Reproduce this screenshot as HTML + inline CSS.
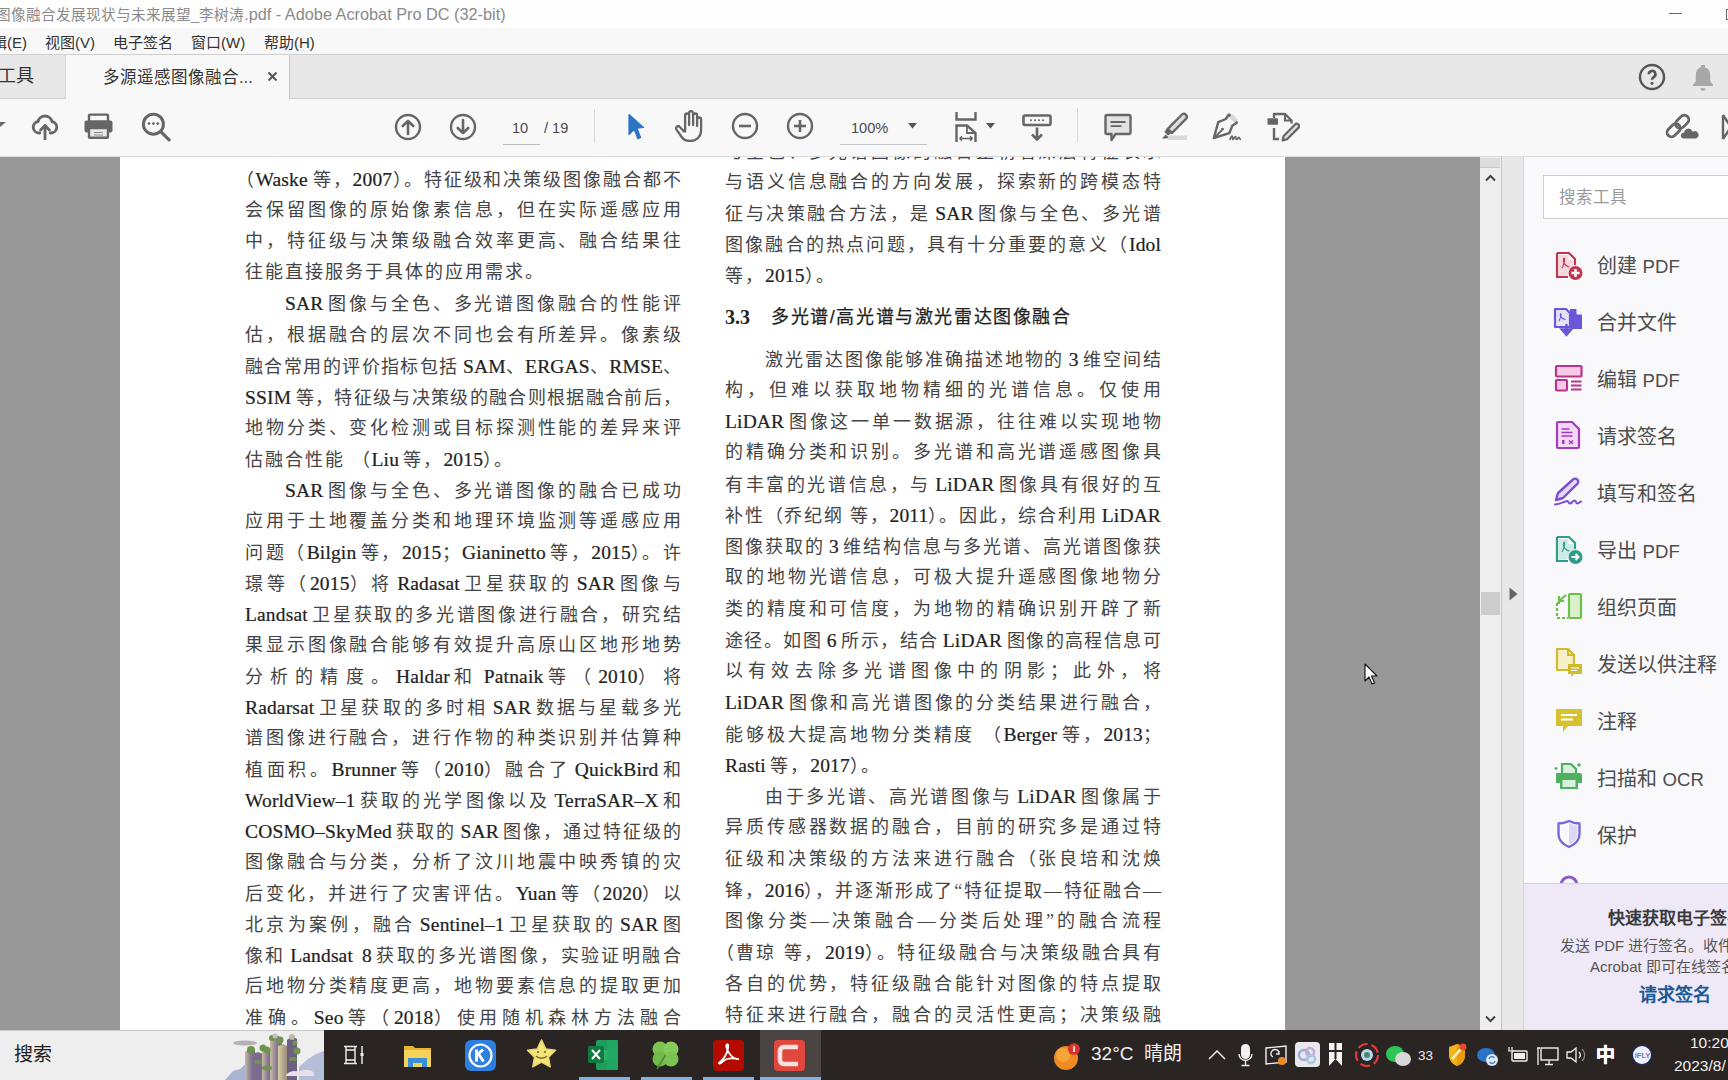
<!DOCTYPE html>
<html lang="zh-CN"><head><meta charset="utf-8">
<style>
*{margin:0;padding:0;box-sizing:border-box}
html,body{width:1728px;height:1080px;overflow:hidden;background:#f8f8f8;font-family:"Liberation Sans",sans-serif;color:#333}
.a{position:absolute}
#title{left:0;top:0;width:1728px;height:28px;background:#fefefe}
#menu{left:0;top:28px;width:1728px;height:26px;background:#f8f8f8}
#tabs{left:0;top:54px;width:1728px;height:45px;background:#e8e8e8;border-top:1px solid #cfcfcf;border-bottom:1px solid #d0d0d0}
#tb{left:0;top:99px;width:1728px;height:58px;background:#f8f8f8;border-bottom:1px solid #dcdcdc}
#doc{left:0;top:157px;width:1480px;height:873px;background:#989898;overflow:hidden}
#page{left:120px;top:0;width:1165px;height:874px;background:#fff}
#sb{left:1480px;top:157px;width:22px;height:873px;background:#eeeeee;border-right:1px solid #c6c6c6}
#rc{left:1502px;top:157px;width:22px;height:873px;background:#e8e8e8;border-right:1px solid #d6d6d6}
#rp{left:1524px;top:157px;width:204px;height:873px;background:#f9f9fb}
#task{left:0;top:1030px;width:1728px;height:50px;background:#2a2524}
.la{-webkit-text-stroke:0.22px #222;color:#222;font-size:19.5px;letter-spacing:0.15px;margin:0 2px}
.la.s0{margin-left:0}
.la.e0{margin-right:0}
.ln{text-autospace:normal;position:absolute;height:31px;line-height:31px;font-family:"Liberation Serif",serif;font-size:18px;letter-spacing:2.76px;color:#444;white-space:nowrap;text-align:justify;text-align-last:justify}
#tb > *{margin-top:-1px}
.mt{top:5px;font-size:15px;line-height:20px;color:#333;white-space:nowrap}
.tl{left:73px;font-size:20px;line-height:26px;color:#4d4d4d;white-space:nowrap}
.tl span{font-size:18.6px}
.ln.l{text-align-last:left}
.hd{position:absolute;height:31px;line-height:31px;font-size:19px;font-weight:bold;color:#231f20;white-space:nowrap}
</style></head><body>

<div id="title" class="a"><div class="a" style="left:-4px;top:4px;font-size:14.6px;line-height:20px;color:#8a8a8a;white-space:nowrap">图像融合发展现状与未来展望_李树涛<span style="font-size:16.3px">.pdf - Adobe Acrobat Pro DC (32-bit)</span></div>
<div class="a" style="left:1669px;top:13px;width:13px;height:1px;background:#666"></div>
<div class="a" style="left:1726px;top:9px;width:10px;height:11px;border:1px solid #666"></div>
</div>
<div id="menu" class="a">
<div class="a mt" style="left:-8px">辑(E)</div>
<div class="a mt" style="left:45px">视图(V)</div>
<div class="a mt" style="left:113px">电子签名</div>
<div class="a mt" style="left:191px">窗口(W)</div>
<div class="a mt" style="left:264px">帮助(H)</div>
</div>
<div id="tabs" class="a">
<div class="a" style="left:-2px;top:8px;font-size:18px;line-height:26px;color:#333">工具</div>
<div class="a" style="left:65px;top:0;width:225px;height:44px;background:#f8f8f8;border-left:1px solid #d4d4d4;border-right:1px solid #c8c8c8"></div>
<div class="a" style="left:103px;top:10px;font-size:16.5px;line-height:24px;color:#333;white-space:nowrap">多源遥感图像融合...</div>
<svg class="a" style="left:267px;top:16px" width="11" height="11" viewBox="0 0 11 11"><path d="M1.5 1.5L9.5 9.5M9.5 1.5L1.5 9.5" stroke="#555" stroke-width="2"/></svg>
<svg class="a" style="left:1638px;top:62px;top:8px" width="28" height="28" viewBox="0 0 28 28"><circle cx="14" cy="14" r="12" fill="none" stroke="#555" stroke-width="2.4"/><path d="M10.8 11.2a3.3 3.3 0 1 1 4.9 2.9c-1.1.7-1.6 1.3-1.6 2.7" fill="none" stroke="#555" stroke-width="2.6"/><circle cx="14" cy="20.3" r="1.5" fill="#555"/></svg>
<svg class="a" style="left:1692px;top:8px" width="22" height="28" viewBox="0 0 22 28"><path d="M9 2h4v2.2c3.5 1 5.2 3.8 5.2 7.5v6.5l2.8 3.6v1.2H1v-1.2l2.8-3.6v-6.5C3.8 8 5.5 5.2 9 4.2z" fill="#a8a8a8"/><path d="M8.5 25.2h5a2.5 2.5 0 0 1-5 0z" fill="#a8a8a8"/></svg>
</div>
<div id="tb" class="a">
<svg class="a" style="left:0;top:22px" width="6" height="8" viewBox="0 0 6 8"><path d="M0 2h6L0 7z" fill="#666"/></svg>
<svg class="a" style="left:31px;top:14px" width="28" height="28" viewBox="0 0 28 28"><path d="M8.8 21H7.8A5.8 5.8 0 0 1 7 9.5a7.2 7.2 0 0 1 14 0A5.8 5.8 0 0 1 20.2 21h-1" fill="none" stroke="#666" stroke-width="2.8" stroke-linecap="round"/><path d="M14 27V13.5M9.6 18l4.4-4.5 4.4 4.5" fill="none" stroke="#666" stroke-width="2.8" stroke-linecap="round" stroke-linejoin="round"/></svg>
<svg class="a" style="left:84px;top:14px" width="29" height="27" viewBox="0 0 29 27"><rect x="5" y="2.6" width="19" height="7" rx="1" fill="none" stroke="#666" stroke-width="2.4"/><rect x="0.5" y="8.5" width="28" height="12" rx="2" fill="#666"/><rect x="5" y="16" width="19" height="9.8" rx="1" fill="#e8e8e8" stroke="#666" stroke-width="2.4"/><path d="M10 20.5h9M10 23h9" stroke="#888" stroke-width="1.2"/></svg>
<svg class="a" style="left:141px;top:14px" width="30" height="30" viewBox="0 0 30 30"><circle cx="12.4" cy="12.2" r="10" fill="none" stroke="#666" stroke-width="3"/><path d="M19.8 19.6l8.3 8.3" stroke="#666" stroke-width="3.2" stroke-linecap="round"/><circle cx="8" cy="11.6" r="1.4" fill="#666"/><circle cx="12.4" cy="11.6" r="1.4" fill="#666"/><circle cx="16.8" cy="11.6" r="1.4" fill="#666"/></svg>
<svg class="a" style="left:394px;top:15px" width="28" height="28" viewBox="0 0 28 28"><circle cx="14" cy="14" r="12" fill="none" stroke="#666" stroke-width="2.4"/><path d="M14 21V8M8.8 13L14 7.8 19.2 13" fill="none" stroke="#666" stroke-width="2.6" stroke-linejoin="round" stroke-linecap="round"/></svg>
<svg class="a" style="left:449px;top:15px" width="28" height="28" viewBox="0 0 28 28"><circle cx="14" cy="14" r="12" fill="none" stroke="#666" stroke-width="2.4"/><path d="M14 7v13M8.8 15L14 20.2 19.2 15" fill="none" stroke="#666" stroke-width="2.6" stroke-linejoin="round" stroke-linecap="round"/></svg>
<div class="a" style="left:512px;top:20px;font-size:14.6px;line-height:20px;color:#4a4a4a">10</div>
<div class="a" style="left:503px;top:46px;width:37px;height:1px;background:#bdbdbd"></div>
<div class="a" style="left:544px;top:20px;font-size:14.6px;line-height:20px;color:#4a4a4a;white-space:nowrap">/ 19</div>
<div class="a" style="left:594px;top:11px;width:1px;height:34px;background:#d6d6d6"></div>
<svg class="a" style="left:627px;top:15px" width="18" height="28" viewBox="0 0 18 28"><path d="M2 1.5L16.5 14.5 10 15.2 13.6 24.5 10.8 25.8 7.2 16.4 2 21.5z" fill="#2b74c5" stroke="#2b74c5" stroke-width="1.2" stroke-linejoin="round"/></svg>
<svg class="a" style="left:675px;top:112px;top:12px" width="31" height="32" viewBox="0 0 31 32"><path d="M9 21.5L4.8 17a2.1 2.1 0 0 0-3.3 2.6l5.2 7.4c2 2.8 4.6 4 8.4 4 6.5 0 11-4.3 11-11V9.5a2 2 0 0 0-4 0V16M22.1 16V5.5a2 2 0 0 0-4 0V15M18.1 15V3.2a2 2 0 0 0-4 0V15M14.1 15V5.5a2 2 0 0 0-4 0V21.5" fill="none" stroke="#666" stroke-width="2.3" stroke-linejoin="round" stroke-linecap="round"/></svg>
<svg class="a" style="left:731px;top:14px" width="28" height="28" viewBox="0 0 28 28"><circle cx="14" cy="14" r="12" fill="none" stroke="#666" stroke-width="2.4"/><path d="M8 14h12" stroke="#666" stroke-width="2.6"/></svg>
<svg class="a" style="left:786px;top:14px" width="28" height="28" viewBox="0 0 28 28"><circle cx="14" cy="14" r="12" fill="none" stroke="#666" stroke-width="2.4"/><path d="M8 14h12M14 8v12" stroke="#666" stroke-width="2.6"/></svg>
<div class="a" style="left:851px;top:20px;font-size:14.6px;line-height:20px;color:#4a4a4a">100%</div>
<svg class="a" style="left:908px;top:25px" width="9" height="6" viewBox="0 0 9 6"><path d="M0 0h9L4.5 5.5z" fill="#555"/></svg>
<div class="a" style="left:840px;top:46px;width:87px;height:1px;background:#c4c4c4"></div>
<svg class="a" style="left:954px;top:14px" width="24" height="31" viewBox="0 0 24 31"><path d="M2.5 0v7.5h19V0" fill="none" stroke="#666" stroke-width="2.4"/><path d="M2.5 30V13.5h10.5l8.5 7.5V30" fill="none" stroke="#666" stroke-width="2.4"/><path d="M13 13.5v7.5h8.5" fill="none" stroke="#666" stroke-width="1.8"/><path d="M5.5 26.5h13M5.5 26.5l2.5-2.2M5.5 26.5l2.5 2.2M18.5 26.5l-2.5-2.2M18.5 26.5l-2.5 2.2" stroke="#666" stroke-width="1.6" fill="none"/></svg>
<svg class="a" style="left:986px;top:25px" width="9" height="6" viewBox="0 0 9 6"><path d="M0 0h9L4.5 5.5z" fill="#555"/></svg>
<svg class="a" style="left:1022px;top:16px" width="30" height="28" viewBox="0 0 30 28"><rect x="1.5" y="1.5" width="27" height="9.5" rx="1.5" fill="none" stroke="#666" stroke-width="2.6"/><circle cx="9" cy="6.2" r="1" fill="#666"/><circle cx="13" cy="6.2" r="1" fill="#666"/><circle cx="17" cy="6.2" r="1" fill="#666"/><circle cx="21" cy="6.2" r="1" fill="#666"/><path d="M15 13.5v12M10 20.5l5 5 5-5" fill="none" stroke="#666" stroke-width="2.6" stroke-linejoin="round"/></svg>
<div class="a" style="left:1077px;top:10px;width:1px;height:34px;background:#d6d6d6"></div>
<svg class="a" style="left:1104px;top:15px" width="28" height="29" viewBox="0 0 28 29"><path d="M3 2h22a1.5 1.5 0 0 1 1.5 1.5v16a1.5 1.5 0 0 1-1.5 1.5H11.5L7.5 27v-6H3a1.5 1.5 0 0 1-1.5-1.5v-16A1.5 1.5 0 0 1 3 2z" fill="#e3e3e3" stroke="#666" stroke-width="2.4" stroke-linejoin="round"/><path d="M6.5 9h15M6.5 13.2h11" stroke="#666" stroke-width="1.8"/></svg>
<svg class="a" style="left:1157px;top:14px" width="32" height="30" viewBox="0 0 32 30"><path d="M25 2.5a3 3 0 0 1 4.2 4.2L15 21l-4.2-4.2z" fill="#ddd" stroke="#666" stroke-width="2.4" stroke-linejoin="round"/><path d="M10.8 16.8l-2.2 3 2.5 2.5 3-2.2" fill="#666" stroke="#666" stroke-width="2" stroke-linejoin="round"/><path d="M8.6 22.5L5 26.5h5l1.5-1.6z" fill="#666"/><rect x="11" y="23.5" width="19" height="4.5" fill="#d9d9d9"/></svg>
<svg class="a" style="left:1212px;top:14px" width="32" height="30" viewBox="0 0 32 30"><path d="M16.8 2.5l-3 4.5-7.5 3.2L1.8 26l15.5-4.8 3-7.5 4.5-3z" fill="none" stroke="#666" stroke-width="2.4" stroke-linejoin="round"/><path d="M17 2.2l7.8 7.8" stroke="#666" stroke-width="2"/><path d="M17.5 5l5.5 5.5 3-3-5.5-5.5z" fill="#d9d9d9"/><path d="M2.5 25.5l7.5-7.5" stroke="#666" stroke-width="1.8"/><circle cx="10.5" cy="17.2" r="1.4" fill="#666"/><path d="M18 27.5c1-3 2-4 2.5-3s-.5 3 .5 3 1.5-3 2.5-3 0 3 1 3 1.5-2 2.5-2.2c.8 0 .6 2.2 1.5 2.2" fill="none" stroke="#666" stroke-width="1.6" stroke-linecap="round"/></svg>
<svg class="a" style="left:1266px;top:14px" width="34" height="31" viewBox="0 0 34 31"><path d="M8 6V2h11l6.5 6.5v3" fill="none" stroke="#666" stroke-width="2.4" stroke-linejoin="round"/><path d="M19 2v6.5h6.5" fill="none" stroke="#666" stroke-width="2"/><rect x="1.5" y="6.2" width="10.5" height="6.5" rx="1" fill="#666"/><path d="M8 16v11h5" fill="none" stroke="#666" stroke-width="2.4"/><path d="M29 12.5a2.4 2.4 0 0 1 3.4 3.4L21 27.3l-4.4 1.2 1.1-4.5z" fill="#ddd" stroke="#666" stroke-width="2.2" stroke-linejoin="round"/></svg>
<svg class="a" style="left:1665px;top:13px" width="34" height="30" viewBox="0 0 34 30"><g transform="rotate(-45 14 14)"><rect x="-1" y="9.5" width="15" height="9" rx="4.5" fill="none" stroke="#666" stroke-width="2.8"/><rect x="11" y="9.5" width="15" height="9" rx="4.5" fill="none" stroke="#666" stroke-width="2.8"/></g><path d="M18 28a3.6 3.6 0 0 1 .6-7.1 5 5 0 0 1 9.4-1A3.9 3.9 0 0 1 31.5 28z" fill="#666" stroke="#f8f8f8" stroke-width="1.2"/></svg>
<svg class="a" style="left:1720px;top:15px" width="10" height="28" viewBox="0 0 10 28"><path d="M3 2v24M3 2l8 12-8 12" fill="none" stroke="#666" stroke-width="2.4"/></svg>
</div>

<div id="doc" class="a"><div id="page" class="a">
<div class="ln" style="left:125px;top:7.3px;width:437.42px;letter-spacing:1.418px"><span style="margin-left:-9.50px">（</span><span class="la s0">Waske</span>等，<span class="la s0 e0">2007</span>）。特征级和决策级图像融合都不</div>
<div class="ln" style="left:125px;top:38.3px;width:438.87px;letter-spacing:2.870px">会保留图像的原始像素信息，但在实际遥感应用</div>
<div class="ln" style="left:125px;top:69.4px;width:438.87px;letter-spacing:2.870px">中，特征级与决策级融合效率更高、融合结果往</div>
<div class="ln l" style="left:125px;top:100.4px;width:436.00px;letter-spacing:2.000px">往能直接服务于具体的应用需求。</div>
<div class="ln" style="left:165px;top:131.4px;width:398.91px;letter-spacing:2.911px"><span class="la s0">SAR</span>图像与全色、多光谱图像融合的性能评</div>
<div class="ln" style="left:125px;top:162.5px;width:438.87px;letter-spacing:2.870px">估，根据融合的层次不同也会有所差异。像素级</div>
<div class="ln" style="left:125px;top:193.5px;width:437.39px;letter-spacing:1.388px">融合常用的评价指标包括<span class="la e0">SAM</span>、<span class="la s0 e0">ERGAS</span>、<span class="la s0 e0">RMSE</span>、</div>
<div class="ln" style="left:125px;top:224.5px;width:437.31px;letter-spacing:1.307px"><span class="la s0">SSIM</span>等，特征级与决策级的融合则根据融合前后，</div>
<div class="ln" style="left:125px;top:255.5px;width:438.87px;letter-spacing:2.870px">地物分类、变化检测或目标探测性能的差异来评</div>
<div class="ln l" style="left:125px;top:286.6px;width:436.00px;letter-spacing:2.000px">估融合性能 （<span class="la s0">Liu</span>等，<span class="la s0 e0">2015</span>）。</div>
<div class="ln" style="left:165px;top:317.6px;width:398.91px;letter-spacing:2.911px"><span class="la s0">SAR</span>图像与全色、多光谱图像的融合已成功</div>
<div class="ln" style="left:125px;top:348.6px;width:438.87px;letter-spacing:2.870px">应用于土地覆盖分类和地理环境监测等遥感应用</div>
<div class="ln" style="left:125px;top:379.7px;width:438.50px;letter-spacing:2.499px">问题（<span class="la s0">Bilgin</span>等，<span class="la s0 e0">2015</span>；<span class="la s0">Gianinetto</span>等，<span class="la s0 e0">2015</span>）。许</div>
<div class="ln" style="left:125px;top:410.7px;width:439.60px;letter-spacing:3.604px">璟等（<span class="la s0 e0">2015</span>）将<span class="la">Radasat</span>卫星获取的<span class="la">SAR</span>图像与</div>
<div class="ln" style="left:125px;top:441.7px;width:438.60px;letter-spacing:2.599px"><span class="la s0">Landsat</span>卫星获取的多光谱图像进行融合，研究结</div>
<div class="ln" style="left:125px;top:472.8px;width:438.87px;letter-spacing:2.870px">果显示图像融合能够有效提升高原山区地形地势</div>
<div class="ln" style="left:125px;top:503.8px;width:443.12px;letter-spacing:7.115px">分析的精度。<span class="la s0">Haldar</span>和<span class="la">Patnaik</span>等（<span class="la s0 e0">2010</span>）将</div>
<div class="ln" style="left:125px;top:534.8px;width:439.18px;letter-spacing:3.176px"><span class="la s0">Radarsat</span>卫星获取的多时相<span class="la">SAR</span>数据与星载多光</div>
<div class="ln" style="left:125px;top:565.8px;width:438.87px;letter-spacing:2.870px">谱图像进行融合，进行作物的种类识别并估算种</div>
<div class="ln" style="left:125px;top:596.9px;width:439.58px;letter-spacing:3.584px">植面积。<span class="la s0">Brunner</span>等（<span class="la s0 e0">2010</span>）融合了<span class="la">QuickBird</span>和</div>
<div class="ln" style="left:125px;top:627.9px;width:439.07px;letter-spacing:3.074px"><span class="la s0">WorldView–1</span>获取的光学图像以及<span class="la">TerraSAR–X</span>和</div>
<div class="ln" style="left:125px;top:658.9px;width:437.90px;letter-spacing:1.899px"><span class="la s0">COSMO–SkyMed</span>获取的<span class="la">SAR</span>图像，通过特征级的</div>
<div class="ln" style="left:125px;top:690.0px;width:438.87px;letter-spacing:2.870px">图像融合与分类，分析了汶川地震中映秀镇的灾</div>
<div class="ln" style="left:125px;top:721.0px;width:438.79px;letter-spacing:2.792px">后变化，并进行了灾害评估。<span class="la s0">Yuan</span>等（<span class="la s0 e0">2020</span>）以</div>
<div class="ln" style="left:125px;top:752.0px;width:439.29px;letter-spacing:3.286px">北京为案例，融合<span class="la">Sentinel–1</span>卫星获取的<span class="la">SAR</span>图</div>
<div class="ln" style="left:125px;top:783.0px;width:438.45px;letter-spacing:2.454px">像和<span class="la">Landsat</span> <span class="la s0">8</span>获取的多光谱图像，实验证明融合</div>
<div class="ln" style="left:125px;top:814.1px;width:438.87px;letter-spacing:2.870px">后地物分类精度更高，地物要素信息的提取更加</div>
<div class="ln" style="left:125px;top:845.1px;width:440.91px;letter-spacing:4.910px">准确。<span class="la s0">Seo</span>等（<span class="la s0 e0">2018</span>）使用随机森林方法融合</div>
<div class="ln" style="left:605px;top:-19.9px;width:438.87px;letter-spacing:2.870px">与全色、多光谱图像的融合正朝着深层特征表示</div>
<div class="ln" style="left:605px;top:9.5px;width:438.87px;letter-spacing:2.870px">与语义信息融合的方向发展，探索新的跨模态特</div>
<div class="ln" style="left:605px;top:40.8px;width:438.57px;letter-spacing:2.573px">征与决策融合方法，是<span class="la">SAR</span>图像与全色、多光谱</div>
<div class="ln" style="left:605px;top:72.0px;width:436.00px;letter-spacing:2.169px">图像融合的热点问题，具有十分重要的意义（<span class="la s0 e0">Idol</span></div>
<div class="ln l" style="left:605px;top:103.2px;width:436.00px;letter-spacing:2.000px">等，<span class="la s0 e0">2015</span>）。</div>
<div class="hd" style="left:605px;top:144.5px"><span style="font-family:'Liberation Serif',serif;font-weight:bold;font-size:20px">3.3</span></div>
<div class="hd" style="left:651px;top:144.5px;font-size:18px;font-weight:normal;-webkit-text-stroke:0.25px #231f20;letter-spacing:1.6px">多光谱/高光谱与激光雷达图像融合</div>
<div class="ln" style="left:645px;top:186.5px;width:397.93px;letter-spacing:1.934px">激光雷达图像能够准确描述地物的<span class="la">3</span>维空间结</div>
<div class="ln" style="left:605px;top:217.8px;width:439.97px;letter-spacing:3.968px">构，但难以获取地物精细的光谱信息。仅使用</div>
<div class="ln" style="left:605px;top:249.0px;width:438.81px;letter-spacing:2.807px"><span class="la s0">LiDAR</span>图像这一单一数据源，往往难以实现地物</div>
<div class="ln" style="left:605px;top:280.2px;width:438.87px;letter-spacing:2.870px">的精确分类和识别。多光谱和高光谱遥感图像具</div>
<div class="ln" style="left:605px;top:311.5px;width:438.56px;letter-spacing:2.557px">有丰富的光谱信息，与<span class="la">LiDAR</span>图像具有很好的互</div>
<div class="ln" style="left:605px;top:342.8px;width:436.00px;letter-spacing:1.751px">补性（乔纪纲 等，<span class="la s0 e0">2011</span>）。因此，综合利用<span class="la e0">LiDAR</span></div>
<div class="ln" style="left:605px;top:374.0px;width:437.94px;letter-spacing:1.940px">图像获取的<span class="la">3</span>维结构信息与多光谱、高光谱图像获</div>
<div class="ln" style="left:605px;top:405.2px;width:438.87px;letter-spacing:2.870px">取的地物光谱信息，可极大提升遥感图像地物分</div>
<div class="ln" style="left:605px;top:436.5px;width:438.87px;letter-spacing:2.870px">类的精度和可信度，为地物的精确识别开辟了新</div>
<div class="ln" style="left:605px;top:467.8px;width:437.46px;letter-spacing:1.463px">途径。如图<span class="la">6</span>所示，结合<span class="la">LiDAR</span>图像的高程信息可</div>
<div class="ln" style="left:605px;top:499.0px;width:441.19px;letter-spacing:5.189px">以有效去除多光谱图像中的阴影；此外，将</div>
<div class="ln" style="left:605px;top:530.2px;width:438.81px;letter-spacing:2.807px"><span class="la s0">LiDAR</span>图像和高光谱图像的分类结果进行融合，</div>
<div class="ln" style="left:605px;top:561.5px;width:438.83px;letter-spacing:2.828px">能够极大提高地物分类精度 （<span class="la s0">Berger</span>等，<span class="la s0 e0">2013</span>；</div>
<div class="ln l" style="left:605px;top:592.8px;width:436.00px;letter-spacing:2.000px"><span class="la s0">Rasti</span>等，<span class="la s0 e0">2017</span>）。</div>
<div class="ln" style="left:645px;top:624.0px;width:398.63px;letter-spacing:2.631px">由于多光谱、高光谱图像与<span class="la">LiDAR</span>图像属于</div>
<div class="ln" style="left:605px;top:655.2px;width:438.87px;letter-spacing:2.870px">异质传感器数据的融合，目前的研究多是通过特</div>
<div class="ln" style="left:605px;top:686.5px;width:438.87px;letter-spacing:2.870px">征级和决策级的方法来进行融合（张良培和沈焕</div>
<div class="ln" style="left:605px;top:717.8px;width:437.84px;letter-spacing:1.840px">锋，<span class="la s0 e0">2016</span>），并逐渐形成了“特征提取—特征融合—</div>
<div class="ln" style="left:605px;top:749.0px;width:439.37px;letter-spacing:3.370px">图像分类—决策融合—分类后处理”的融合流程</div>
<div class="ln" style="left:605px;top:780.2px;width:438.01px;letter-spacing:2.015px"><span style="margin-left:-9.50px">（</span>曹琼 等，<span class="la s0 e0">2019</span>）。特征级融合与决策级融合具有</div>
<div class="ln" style="left:605px;top:811.5px;width:438.87px;letter-spacing:2.870px">各自的优势，特征级融合能针对图像的特点提取</div>
<div class="ln" style="left:605px;top:842.8px;width:438.87px;letter-spacing:2.870px">特征来进行融合，融合的灵活性更高；决策级融</div>
</div><!--/page--></div>

<div id="sb" class="a">
<div class="a" style="left:0;top:1px;width:20px;height:10px;background:#dcdcdc;border-bottom:1px solid #c8c8c8"></div>
<svg class="a" style="left:5px;top:17px" width="11" height="8" viewBox="0 0 11 8"><path d="M1 6.5L5.5 2 10 6.5" fill="none" stroke="#444" stroke-width="2"/></svg>
<div class="a" style="left:1px;top:435px;width:19px;height:23px;background:#cdcdcd"></div>
<svg class="a" style="left:5px;top:858px" width="11" height="8" viewBox="0 0 11 8"><path d="M1 1.5L5.5 6 10 1.5" fill="none" stroke="#444" stroke-width="2"/></svg>
</div>
<div id="rc" class="a">
<svg class="a" style="left:7px;top:430px" width="9" height="14" viewBox="0 0 9 14"><path d="M0.5 0.5L8.5 7 0.5 13.5z" fill="#666"/></svg>
</div>
<div id="rp" class="a">
<div class="a" style="left:19px;top:18px;width:200px;height:44px;background:#fff;border:1px solid #cfcfcf"></div>
<div class="a" style="left:35px;top:29px;font-size:16.5px;line-height:22px;color:#9a9a9a;white-space:nowrap">搜索工具</div>
<div class="a tl" style="top:96px">创建 <span>PDF</span></div>
<div class="a tl" style="top:153px">合并文件</div>
<div class="a tl" style="top:210px">编辑 <span>PDF</span></div>
<div class="a tl" style="top:267px">请求签名</div>
<div class="a tl" style="top:324px">填写和签名</div>
<div class="a tl" style="top:381px">导出 <span>PDF</span></div>
<div class="a tl" style="top:438px">组织页面</div>
<div class="a tl" style="top:495px">发送以供注释</div>
<div class="a tl" style="top:552px">注释</div>
<div class="a tl" style="top:609px">扫描和 <span>OCR</span></div>
<div class="a tl" style="top:666px">保护</div>

<svg class="a" style="left:30px;top:94px" width="30" height="30" viewBox="0 0 30 30"><path d="M3 2h12l6 6v6" fill="none" stroke="#c0364f" stroke-width="2.2"/><path d="M3 2v24h11" fill="#f6d9de" stroke="#c0364f" stroke-width="2.2"/><path d="M4.5 4h10v5h5v7a8 8 0 0 0-6 8.5H4.5z" fill="#f6d9de"/><path d="M8 17c2-4 3-8 2.5-9.5S9 9 9.5 11s4 5 6 5" fill="none" stroke="#c0364f" stroke-width="1.1"/><circle cx="21.5" cy="22" r="7" fill="#c0364f"/><path d="M21.5 18v8M17.5 22h8" stroke="#fff" stroke-width="2.4"/></svg>
<svg class="a" style="left:29px;top:150px" width="32" height="32" viewBox="0 0 32 32"><path d="M2 2h11l4 4v14H2z" fill="#e6e1fb" stroke="#6957d8" stroke-width="2.2" stroke-linejoin="round"/><path d="M6 14c1.5-3 2.3-6 2-7s-1 .5-.5 2 3 3.5 5 3.5" fill="none" stroke="#6957d8" stroke-width="1.1"/><path d="M17 2h7l5 5v15H17z" fill="#6957d8"/><path d="M24 2v5h5" fill="#fff" stroke="#fff" stroke-width="1"/><path d="M13.5 17v9M8.8 22.5L13.5 28l4.7-5.5z" fill="#6957d8" stroke="#6957d8" stroke-width="2.4"/></svg>
<svg class="a" style="left:30px;top:207px" width="30" height="30" viewBox="0 0 30 30"><rect x="2" y="2" width="25.5" height="10.5" rx="1" fill="#f7c9e6" stroke="#b8338a" stroke-width="2.2"/><rect x="2" y="16" width="11" height="10.5" rx="1" fill="#f7c9e6" stroke="#b8338a" stroke-width="2.2"/><path d="M17 17.5h10.5M17 21.5h10.5M17 25.5h10.5" stroke="#b8338a" stroke-width="1.8"/></svg>
<svg class="a" style="left:31px;top:263px" width="28" height="30" viewBox="0 0 28 30"><path d="M3 2h14l7 7v18a1 1 0 0 1-1 1H3a1 1 0 0 1-1-1V3a1 1 0 0 1 1-1z" fill="#f3d9f7" stroke="#a73bc0" stroke-width="2.2" stroke-linejoin="round"/><path d="M6.5 9h8M6.5 12.5h11M6.5 16h11" stroke="#a73bc0" stroke-width="1.5"/><path d="M7 20h2.5v4H7z" fill="#a73bc0"/><path d="M14 20.5l4 3.5M18 20.5l-4 3.5" stroke="#a73bc0" stroke-width="1.6"/></svg>
<svg class="a" style="left:28px;top:320px" width="32" height="30" viewBox="0 0 32 30"><path d="M21 2.5a3 3 0 0 1 4.3 4.3L11 21l-7 2 2-7z" fill="#e3d8f8" stroke="#7b4fd0" stroke-width="2.4" stroke-linejoin="round"/><path d="M3 27.5c5-.5 9-3 12-3.5 2-.2 1 2.5 3 2.5s2.5-3 4.5-3 1 3 3 3 2-2 3.5-2" fill="none" stroke="#7b4fd0" stroke-width="2" stroke-linecap="round"/></svg>
<svg class="a" style="left:30px;top:378px" width="30" height="30" viewBox="0 0 30 30"><path d="M3 2h12l6 6v6" fill="none" stroke="#2f9c8a" stroke-width="2.2"/><path d="M3 2v24h11" fill="none" stroke="#2f9c8a" stroke-width="2.2"/><path d="M4.5 4h10v5h5v7a8 8 0 0 0-6 8.5H4.5z" fill="#cdebe4"/><path d="M8 17c2-4 3-8 2.5-9.5S9 9 9.5 11s4 5 6 5" fill="none" stroke="#2f9c8a" stroke-width="1.1"/><circle cx="21.5" cy="22" r="7" fill="#2f9c8a"/><path d="M17.5 22h6.5M21.5 19l3 3-3 3" fill="none" stroke="#fff" stroke-width="2"/></svg>
<svg class="a" style="left:30px;top:434px" width="30" height="30" viewBox="0 0 30 30"><rect x="15" y="3" width="12" height="24" rx="1" fill="#dcf0cf" stroke="#6cc04a" stroke-width="2.2"/><path d="M3 12v15h11M3 12h4" fill="none" stroke="#6cc04a" stroke-width="2.2" stroke-dasharray="3 2"/><path d="M12 4L5 10M5 5v5h5" fill="none" stroke="#6cc04a" stroke-width="2.2"/></svg>
<svg class="a" style="left:30px;top:490px" width="30" height="32" viewBox="0 0 30 32"><path d="M3 2h11l6 6v15H3z" fill="#f6f0c6" stroke="#cdbd2c" stroke-width="2.2" stroke-linejoin="round"/><path d="M14 2v6h6" fill="none" stroke="#cdbd2c" stroke-width="2"/><path d="M14 17h14v10H20l-3 3v-3h-3z" fill="#cdbd2c"/><path d="M17 21h8M17 23.5h6" stroke="#fff" stroke-width="1.2"/></svg>
<svg class="a" style="left:30px;top:549px" width="30" height="30" viewBox="0 0 30 30"><path d="M3 3h24a1 1 0 0 1 1 1v15a1 1 0 0 1-1 1H14l-5 6v-6H3a1 1 0 0 1-1-1V4a1 1 0 0 1 1-1z" fill="#d6c12e"/><path d="M7 9h16M7 13.5h12" stroke="#fff" stroke-width="2"/></svg>
<svg class="a" style="left:29px;top:604px" width="32" height="32" viewBox="0 0 32 32"><path d="M9 12V3h9l5 5v4" fill="#d8f0dc" stroke="#4fb062" stroke-width="2.2"/><path d="M3 12h24a2 2 0 0 1 2 2v8h-4v6H7v-6H3z" fill="#4fb062"/><rect x="9.5" y="19" width="13" height="7" fill="#d8f0dc"/><path d="M26 2v4M24 4h4M3 6v3M1.5 7.5h3" stroke="#4fb062" stroke-width="1.3"/></svg>
<svg class="a" style="left:32px;top:662px" width="26" height="30" viewBox="0 0 26 30"><path d="M13 2C9 4 6 4.5 2.5 4.5V15c0 6 4.5 10.5 10.5 13 6-2.5 10.5-7 10.5-13V4.5C20 4.5 17 4 13 2z" fill="none" stroke="#7a68d6" stroke-width="2.4" stroke-linejoin="round"/><path d="M13 4.2c3 1.4 5.5 2 8.3 2.2V15c0 4.8-3.5 8.5-8.3 10.7z" fill="#ddd6f6"/></svg>
<svg class="a" style="left:34px;top:718px" width="22" height="10" viewBox="0 0 22 10"><path d="M3 10a8 8 0 0 1 16 0" fill="none" stroke="#8a5cc9" stroke-width="3"/></svg>

<div class="a" style="left:0;top:726px;width:204px;height:148px;background:#efe9f7;border-top:1px solid #d7d0e2"></div>
<div class="a" style="left:84px;top:751px;font-size:17px;line-height:22px;font-weight:bold;color:#3a3a3a;white-space:nowrap">快速获取电子签名</div>
<div class="a" style="left:36px;top:779px;font-size:15px;line-height:20px;color:#555;white-space:nowrap">发送 PDF 进行签名。收件人</div>
<div class="a" style="left:66px;top:800px;font-size:15px;line-height:20px;color:#555;white-space:nowrap">Acrobat 即可在线签名</div>
<div class="a" style="left:115px;top:826px;font-size:18px;line-height:24px;font-weight:bold;color:#1c5a96;white-space:nowrap">请求签名</div>
</div>


<div id="task" class="a">
<div class="a" style="left:0;top:0;width:324px;height:50px;background:#eeeeee;border-top:1px solid #c8c8c8"></div>
<div class="a" style="left:14px;top:13px;font-size:19px;line-height:24px;color:#222">搜索</div>
<svg class="a" style="left:215px;top:0px" width="109" height="50" viewBox="0 0 109 50">
<defs><linearGradient id="pg1" x1="0" x2="1"><stop offset="0" stop-color="#c9bca0"/><stop offset=".5" stop-color="#8f8098"/><stop offset="1" stop-color="#6a5c7c"/></linearGradient>
<linearGradient id="pg2" x1="0" x2="1"><stop offset="0" stop-color="#d8cca0"/><stop offset="1" stop-color="#9a8c80"/></linearGradient></defs>
<path d="M10 50l8-9 7-2 9-8 4 19z" fill="#a8b4d0"/>
<path d="M84 50V37l9-8 8-5 8-3v29z" fill="#b4bed8"/>
<ellipse cx="30" cy="13" rx="12" ry="2.6" fill="#b6b0b8"/>
<path d="M30 50V22l4-3 6 2v29z" fill="url(#pg1)"/>
<path d="M38 50V24l5-2 5 2v26z" fill="#7c6b8e"/>
<path d="M47 50V19l5-2 5 2v31z" fill="url(#pg1)"/>
<path d="M55 50V8l6-3 6 3v42z" fill="url(#pg1)"/>
<path d="M63 50V16l5-2 4 2v34z" fill="url(#pg2)"/>
<path d="M72 50V10l5-4 5 3v41z" fill="#6e6080"/>
<g fill="#6f9450"><circle cx="36" cy="20" r="4"/><circle cx="48" cy="18" r="3.5"/><circle cx="52" cy="20" r="3.5"/><circle cx="57" cy="8" r="3"/><circle cx="65" cy="10" r="3.5"/><circle cx="82" cy="21" r="3.5"/><circle cx="80" cy="13" r="2.5"/><ellipse cx="43" cy="32" rx="4" ry="2"/><ellipse cx="52" cy="38" rx="5" ry="2.5"/><ellipse cx="78" cy="29" rx="4" ry="2"/></g>
<circle cx="77" cy="7" r="3" fill="#bdb8a8"/><circle cx="60" cy="6" r="2.5" fill="#c8c0b0"/>
<path d="M71 45c3-4 9-5 13-3 4-3 12-3 15 1v3H71z" fill="#e9dfe8"/>
</svg>
<div class="a" style="left:324px;top:0;width:1404px;height:50px;background:#2a2423"></div>
<svg class="a" style="left:343px;top:15px" width="22" height="20" viewBox="0 0 22 20"><path d="M1 1.5h13M1 18.5h13M3 1.5v17M12 1.5v17M3 5h9M3 15h9" fill="none" stroke="#f2f2f2" stroke-width="1.4"/><path d="M19 1v18" stroke="#f2f2f2" stroke-width="1.4"/><rect x="17.5" y="8" width="3" height="3" fill="#f2f2f2"/></svg>
<svg class="a" style="left:403px;top:13px" width="29" height="25" viewBox="0 0 29 25"><path d="M1 3h9l2 2h16v19H1z" fill="#e8b730"/><path d="M1 7h27v17H1z" fill="#f7d25a"/><path d="M5 24v-9h19v9h-5v-4h-9v4z" fill="#3a8fd6"/></svg>
<svg class="a" style="left:465px;top:10px" width="31" height="31" viewBox="0 0 31 31"><rect x="0" y="0" width="31" height="31" rx="6" fill="#2f7fe0"/><circle cx="15.5" cy="15.5" r="11" fill="none" stroke="#fff" stroke-width="2.2"/><path d="M11.5 9.5v12M11.5 15.5l6.5-6M13.5 14l5 7.5" fill="none" stroke="#fff" stroke-width="3"/></svg>
<svg class="a" style="left:526px;top:9px" width="31" height="31" viewBox="0 0 31 31"><path d="M15.5 1l4.3 9 9.7 1.3-7 6.8 1.7 9.7-8.7-4.6-8.7 4.6 1.7-9.7-7-6.8 9.7-1.3z" fill="#f3e57a" stroke="#e8d86a" stroke-width="1.5" stroke-linejoin="round"/><path d="M10 17c2.5 3 8.5 3 11 0" fill="none" stroke="#7a6a20" stroke-width="1.3"/><circle cx="12" cy="13" r="1.1" fill="#7a6a20"/><circle cx="19" cy="13" r="1.1" fill="#7a6a20"/></svg>
<svg class="a" style="left:588px;top:10px" width="31" height="30" viewBox="0 0 31 30"><rect x="8" y="0" width="22" height="30" rx="2" fill="#1e9e5a"/><rect x="8" y="10" width="22" height="10" fill="#2bb36a"/><rect x="19" y="0" width="11" height="30" fill="#21a863" opacity=".8"/><rect x="0" y="6" width="16" height="17" rx="2" fill="#107c41"/><path d="M4 10l8 9M12 10l-8 9" stroke="#fff" stroke-width="2"/></svg>
<svg class="a" style="left:650px;top:9px" width="31" height="32" viewBox="0 0 31 32"><circle cx="10" cy="10" r="7.5" fill="#7cc451"/><circle cx="21" cy="10" r="7.5" fill="#86cc5a"/><circle cx="10" cy="20" r="7.5" fill="#72bb49"/><circle cx="21" cy="20" r="7.5" fill="#7cc451"/><path d="M15.5 16L7 30" stroke="#4f8a30" stroke-width="1.5"/></svg>
<svg class="a" style="left:713px;top:10px" width="31" height="31" viewBox="0 0 31 31"><rect x="0" y="0" width="31" height="31" rx="4" fill="#b30b00"/><path d="M6 23c4-3 8-9 9-15s-3-4-1 1 5 9 10 10-5-2-10 0-7 6-8 4z" fill="none" stroke="#fff" stroke-width="1.8"/></svg>
<div class="a" style="left:760px;top:0;width:61px;height:50px;background:#4a4443"></div>
<svg class="a" style="left:774px;top:10px" width="31" height="31" viewBox="0 0 31 31"><rect x="0" y="0" width="31" height="31" rx="4" fill="#e2473d"/><path d="M24 7H10a4 4 0 0 0-4 4v9a4 4 0 0 0 4 4h14" fill="none" stroke="#fbe0dc" stroke-width="4.5"/></svg>
<div class="a" style="left:579px;top:47px;width:51px;height:3px;background:#7fb1e3"></div>
<div class="a" style="left:641px;top:47px;width:51px;height:3px;background:#7fb1e3"></div>
<div class="a" style="left:703px;top:47px;width:51px;height:3px;background:#7fb1e3"></div>
<div class="a" style="left:760px;top:47px;width:61px;height:3px;background:#7fb1e3"></div>
<svg class="a" style="left:1052px;top:12px" width="30" height="30" viewBox="0 0 30 30"><circle cx="14" cy="16" r="12" fill="#f08a24"/><circle cx="11" cy="13" r="7" fill="#f8b040" opacity=".7"/><circle cx="22" cy="7" r="6" fill="#d9302a"/><path d="M22 4v6" stroke="#fff" stroke-width="1.6"/></svg>
<div class="a" style="left:1091px;top:12px;font-size:19px;line-height:24px;color:#f0f0f0;white-space:nowrap">32°C&nbsp;&nbsp;晴朗</div>
<svg class="a" style="left:1208px;top:20px" width="18" height="10" viewBox="0 0 18 10"><path d="M1 9l8-8 8 8" fill="none" stroke="#eee" stroke-width="1.5"/></svg>
<svg class="a" style="left:1238px;top:13px" width="15" height="24" viewBox="0 0 15 24"><rect x="3" y="1" width="9" height="15" rx="4.5" fill="#f0f0f0"/><path d="M1 11a6.5 6.5 0 0 0 13 0M7.5 17.5V22M3.5 22.5h8" fill="none" stroke="#f0f0f0" stroke-width="1.4"/></svg>
<svg class="a" style="left:1265px;top:14px" width="24" height="22" viewBox="0 0 24 22"><path d="M1 4l20-2v16l-20 2z" fill="none" stroke="#f0f0f0" stroke-width="1.4"/><path d="M8 13a4 4 0 1 1 6-3M14 7v3h-3" fill="none" stroke="#f0f0f0" stroke-width="1.3"/><circle cx="17" cy="17" r="4" fill="#f08a24"/></svg>
<svg class="a" style="left:1295px;top:12px" width="25" height="25" viewBox="0 0 25 25"><rect x="0" y="0" width="25" height="25" rx="4" fill="#e8e8ee"/><circle cx="9" cy="13" r="5" fill="none" stroke="#9aaed8" stroke-width="2.4"/><circle cx="15" cy="10" r="4" fill="none" stroke="#c9a8d8" stroke-width="2.4"/><circle cx="16" cy="17" r="4" fill="none" stroke="#a8c8e0" stroke-width="2.4"/></svg>
<svg class="a" style="left:1328px;top:12px" width="15" height="25" viewBox="0 0 15 25"><path d="M1 1h13v23l-6.5-7L1 24z" fill="#f5f5f5"/><path d="M7.5 1v16M1 9h13" stroke="#2a2423" stroke-width="2"/></svg>
<svg class="a" style="left:1354px;top:12px" width="26" height="26" viewBox="0 0 26 26"><circle cx="13" cy="13" r="11" fill="none" stroke="#e23b3b" stroke-width="2.2" stroke-dasharray="10 4"/><circle cx="13" cy="13" r="6" fill="#b8d8f0"/><circle cx="13" cy="13" r="3" fill="#4a8a60"/></svg>
<svg class="a" style="left:1385px;top:14px" width="28" height="24" viewBox="0 0 28 24"><ellipse cx="10" cy="10" rx="9" ry="8" fill="#2ec457"/><ellipse cx="18" cy="15" rx="8" ry="7" fill="#d8d8d8"/></svg>
<div class="a" style="left:1418px;top:17px;font-size:13.5px;line-height:18px;color:#eee">33</div>
<svg class="a" style="left:1447px;top:13px" width="20" height="24" viewBox="0 0 20 24"><path d="M10 1L2 4v8c0 6 4 9.5 8 11 4-1.5 8-5 8-11V4z" fill="#f2b31b"/><path d="M10 1v22c4-1.5 8-5 8-11V4z" fill="#e89b10"/><path d="M5 16l9-10" stroke="#fff4d0" stroke-width="2.4"/><circle cx="16" cy="4" r="3.4" fill="#e84a2a"/></svg>
<svg class="a" style="left:1476px;top:15px" width="24" height="22" viewBox="0 0 24 22"><ellipse cx="10" cy="10" rx="9" ry="7" fill="#2a74c8"/><circle cx="16" cy="15" r="6" fill="#dfe8f4"/><path d="M13 14a3 3 0 0 1 5.5-1M19 16a3 3 0 0 1-5.5 1" fill="none" stroke="#2a74c8" stroke-width="1.3"/></svg>
<svg class="a" style="left:1508px;top:16px" width="20" height="17" viewBox="0 0 20 17"><rect x="4" y="5" width="15" height="10" rx="1" fill="none" stroke="#f0f0f0" stroke-width="1.4"/><rect x="6" y="7" width="11" height="6" fill="#f0f0f0"/><path d="M1 1v4M4 1v4M0 5h5" stroke="#f0f0f0" stroke-width="1.2"/></svg>
<svg class="a" style="left:1537px;top:16px" width="22" height="20" viewBox="0 0 22 20"><rect x="4" y="2" width="17" height="12" fill="none" stroke="#f0f0f0" stroke-width="1.4"/><path d="M12 14v4M8 18.5h8M1 2v17M0 2h3" stroke="#f0f0f0" stroke-width="1.3"/></svg>
<svg class="a" style="left:1566px;top:16px" width="21" height="18" viewBox="0 0 21 18"><path d="M1 6h4l5-4v14l-5-4H1z" fill="none" stroke="#f0f0f0" stroke-width="1.3"/><path d="M13 6a4 4 0 0 1 0 6" fill="none" stroke="#f0f0f0" stroke-width="1.3"/><path d="M16 3a8 8 0 0 1 0 12" fill="none" stroke="#888" stroke-width="1.3"/></svg>
<div class="a" style="left:1596px;top:13px;font-size:19px;line-height:26px;color:#fff;font-weight:bold;-webkit-text-stroke:0.6px #fff">中</div>
<svg class="a" style="left:1631px;top:14px" width="22" height="22" viewBox="0 0 22 22"><circle cx="11" cy="11" r="10.5" fill="#1e2a5a"/><circle cx="11" cy="11" r="9" fill="#eef0fa"/><text x="11.5" y="14" font-size="7.5" text-anchor="middle" fill="#6a78b8" font-family="Liberation Sans" font-weight="bold">iFLY</text></svg>
<div class="a" style="left:1690px;top:3px;font-size:15.5px;line-height:20px;color:#f0f0f0;white-space:nowrap">10:20</div>
<div class="a" style="left:1674px;top:26px;font-size:15.5px;line-height:20px;color:#f0f0f0;white-space:nowrap">2023/8/</div>
</div>

<svg class="a" style="left:1364px;top:663px" width="14" height="22" viewBox="0 0 14 22"><path d="M1 1v17l4-4 3 7 2.5-1-3-7H13z" fill="#fff" stroke="#111" stroke-width="1.1" stroke-linejoin="round"/></svg>
</body></html>
